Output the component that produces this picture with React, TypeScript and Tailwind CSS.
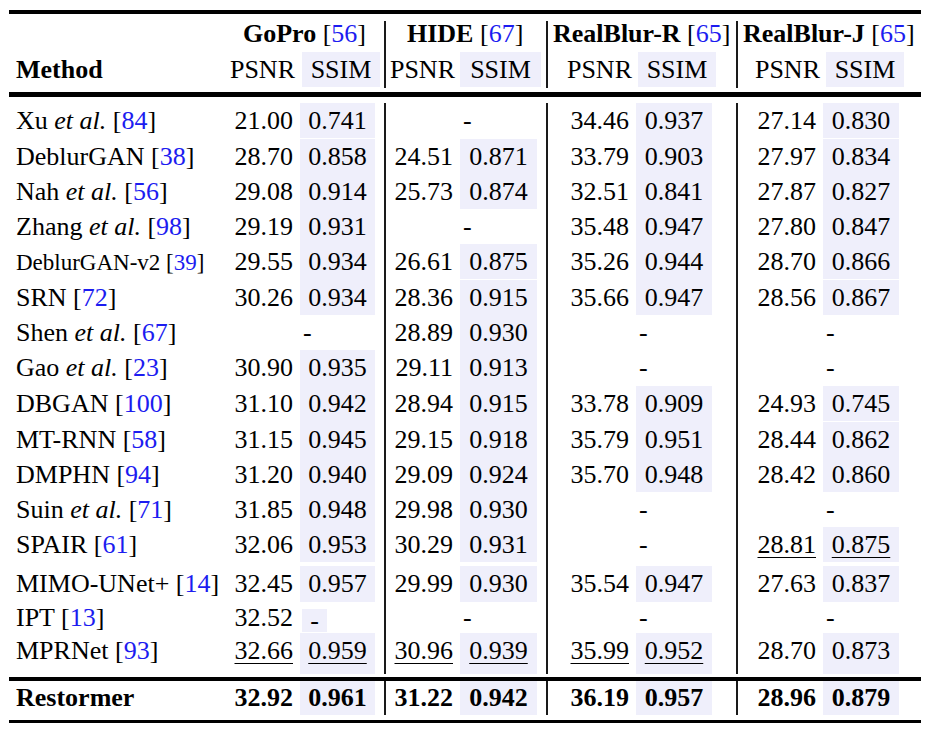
import React from 'react'

const COLS =
  'grid grid-rows-1 grid-cols-[219px_72px_75px_11px_74px_77px_11px_88px_76px_26px_85px_76px_22px]'

// shade variants for the SSIM cells
const S = 'bg-[#efeffb]'
const SB = 'bg-[#efeffb] mb-[1px]'
const ST = 'bg-[#efeffb] mt-[4px]'
const SP = 'bg-[#efeffb] pb-[5px]'
const IPT = 'bg-[#efeffb] ml-[2px] mr-[48px] mt-[7px] mb-[1px]'

type Grp = '-' | [string, string, string, boolean?]

type Row = {
  name: React.ReactNode
  h: string
  pad?: string
  small?: boolean
  go: Grp
  hide: Grp
  rbr: Grp
  rbj: Grp
}

function Cite({ n }: { n: string }) {
  return (
    <>
      [<span className="text-[#1c1cf0]">{n}</span>]
    </>
  )
}

function VLine() {
  return <div className="border-r-2 border-[#1a1a1a]" />
}

function Group({ g, pad = '', bold = false }: { g: Grp; pad?: string; bold?: boolean }) {
  if (g === '-') {
    return (
      <>
        <div />
        <div className={`flex items-center pl-[3px] ${pad}`}>-</div>
      </>
    )
  }
  const [p, s, sh, u] = g
  const uc = u ? 'underline decoration-1 underline-offset-[4px]' : ''
  return (
    <>
      <div className={`flex items-center justify-end pr-[7px] ${pad} ${bold ? 'font-bold' : ''}`}>
        <span className={uc}>{p}</span>
      </div>
      <div className={`flex items-center justify-center ${sh} ${bold ? 'font-bold' : ''}`}>
        <span className={uc}>{s}</span>
      </div>
    </>
  )
}

const rows: Row[] = [
  {
    name: <>Xu <i>et al.</i> <Cite n="84" /></>,
    h: 'h-[36px]',
    go: ['21.00', '0.741', SB],
    hide: '-',
    rbr: ['34.46', '0.937', S],
    rbj: ['27.14', '0.830', SB],
  },
  {
    name: <>DeblurGAN <Cite n="38" /></>,
    h: 'h-[35px]',
    go: ['28.70', '0.858', S],
    hide: ['24.51', '0.871', S],
    rbr: ['33.79', '0.903', S],
    rbj: ['27.97', '0.834', S],
  },
  {
    name: <>Nah <i>et al.</i> <Cite n="56" /></>,
    h: 'h-[35px]',
    go: ['29.08', '0.914', S],
    hide: ['25.73', '0.874', S],
    rbr: ['32.51', '0.841', S],
    rbj: ['27.87', '0.827', S],
  },
  {
    name: <>Zhang <i>et al.</i> <Cite n="98" /></>,
    h: 'h-[35px]',
    go: ['29.19', '0.931', S],
    hide: '-',
    rbr: ['35.48', '0.947', S],
    rbj: ['27.80', '0.847', S],
  },
  {
    name: <>DeblurGAN-v2 <Cite n="39" /></>,
    h: 'h-[36px]',
    small: true,
    go: ['29.55', '0.934', S],
    hide: ['26.61', '0.875', SB],
    rbr: ['35.26', '0.944', S],
    rbj: ['28.70', '0.866', SB],
  },
  {
    name: <>SRN <Cite n="72" /></>,
    h: 'h-[35px]',
    go: ['30.26', '0.934', S],
    hide: ['28.36', '0.915', S],
    rbr: ['35.66', '0.947', S],
    rbj: ['28.56', '0.867', S],
  },
  {
    name: <>Shen <i>et al.</i> <Cite n="67" /></>,
    h: 'h-[35px]',
    go: '-',
    hide: ['28.89', '0.930', S],
    rbr: '-',
    rbj: '-',
  },
  {
    name: <>Gao <i>et al.</i> <Cite n="23" /></>,
    h: 'h-[36px]',
    go: ['30.90', '0.935', S],
    hide: ['29.11', '0.913', S],
    rbr: '-',
    rbj: '-',
  },
  {
    name: <>DBGAN <Cite n="100" /></>,
    h: 'h-[36px]',
    go: ['31.10', '0.942', S],
    hide: ['28.94', '0.915', S],
    rbr: ['33.78', '0.909', S],
    rbj: ['24.93', '0.745', SB],
  },
  {
    name: <>MT-RNN <Cite n="58" /></>,
    h: 'h-[35px]',
    go: ['31.15', '0.945', S],
    hide: ['29.15', '0.918', S],
    rbr: ['35.79', '0.951', S],
    rbj: ['28.44', '0.862', S],
  },
  {
    name: <>DMPHN <Cite n="94" /></>,
    h: 'h-[35px]',
    go: ['31.20', '0.940', S],
    hide: ['29.09', '0.924', S],
    rbr: ['35.70', '0.948', S],
    rbj: ['28.42', '0.860', S],
  },
  {
    name: <>Suin <i>et al.</i> <Cite n="71" /></>,
    h: 'h-[35px]',
    go: ['31.85', '0.948', S],
    hide: ['29.98', '0.930', S],
    rbr: '-',
    rbj: '-',
  },
  {
    name: <>SPAIR <Cite n="61" /></>,
    h: 'h-[35px]',
    go: ['32.06', '0.953', S],
    hide: ['30.29', '0.931', S],
    rbr: '-',
    rbj: ['28.81', '0.875', S, true],
  },
  {
    name: <>MIMO-UNet+ <Cite n="14" /></>,
    h: 'h-[40px]',
    pad: 'pt-[4px]',
    go: ['32.45', '0.957', ST],
    hide: ['29.99', '0.930', ST],
    rbr: ['35.54', '0.947', ST],
    rbj: ['27.63', '0.837', ST],
  },
  {
    name: <>IPT <Cite n="13" /></>,
    h: 'h-[31px]',
    go: ['32.52', '-', IPT],
    hide: '-',
    rbr: '-',
    rbj: '-',
  },
  {
    name: <>MPRNet <Cite n="93" /></>,
    h: 'h-[41px]',
    pad: 'pb-[5px]',
    go: ['32.66', '0.959', SP, true],
    hide: ['30.96', '0.939', SP, true],
    rbr: ['35.99', '0.952', SP, true],
    rbj: ['28.70', '0.873', SP],
  },
]

export default function App() {
  return (
    <div className="w-[928px] h-[732px] bg-white text-black font-['Liberation_Serif',serif] text-[26px] leading-none overflow-hidden">
      <div className="ml-[9px] w-[912px]">
        {/* top rule */}
        <div className="mt-[10px] h-[4px] bg-black" />

        {/* header */}
        <div className={`${COLS} grid-rows-[36px_35px] mt-[2px] mb-[5px]`}>
          <div />
          <div className="col-span-2 flex items-center pl-[15px] whitespace-nowrap">
            <span>
              <b>GoPro</b> <Cite n="56" />
            </span>
          </div>
          <div className="row-span-2 border-r-2 border-[#1a1a1a] mt-[5px] -mb-[1px]" />
          <div className="col-span-2 flex items-center pl-[21px] whitespace-nowrap">
            <span>
              <b>HIDE</b> <Cite n="67" />
            </span>
          </div>
          <div className="row-span-2 border-r-2 border-[#1a1a1a] mt-[5px] -mb-[1px]" />
          <div className="col-span-2 flex items-center pl-[5px] whitespace-nowrap">
            <span>
              <b>RealBlur-R</b> <Cite n="65" />
            </span>
          </div>
          <div className="row-span-2 border-r-2 border-[#1a1a1a] mt-[5px] -mb-[1px]" />
          <div className="col-span-3 flex items-center pl-[5px] whitespace-nowrap">
            <span>
              <b>RealBlur-J</b> <Cite n="65" />
            </span>
          </div>

          <div className="flex items-center pl-[7px] font-bold">Method</div>
          <div className="flex items-center justify-end pr-[5px]">PSNR</div>
          <div className="flex items-center justify-center bg-[#efeffb] ml-[2px] -mr-[5px]">SSIM</div>
          <div className="flex items-center justify-end pr-[5px]">PSNR</div>
          <div className="flex items-center justify-center bg-[#efeffb] -mr-[4px]">SSIM</div>
          <div className="flex items-center justify-end pr-[4px]">PSNR</div>
          <div className="flex items-center justify-center bg-[#efeffb] ml-[2px] -mr-[4px]">SSIM</div>
          <div className="flex items-center justify-end pr-[3px]">PSNR</div>
          <div className="flex items-center justify-center bg-[#efeffb] ml-[3px] -mr-[5px]">SSIM</div>
          <div />
        </div>

        {/* mid rule */}
        <div className="h-[5px] bg-black" />

        {/* body */}
        <div className="pt-[6px] pb-[3px]">
          {rows.map((r, i) => (
            <div key={i} className={`${COLS} ${r.h}`}>
              <div
                className={`flex items-center pl-[7px] whitespace-nowrap ${r.pad ?? ''} ${
                  r.small ? 'text-[23px]' : ''
                }`}
              >
                <span>{r.name}</span>
              </div>
              <Group g={r.go} pad={r.pad} />
              <VLine />
              <Group g={r.hide} pad={r.pad} />
              <VLine />
              <Group g={r.rbr} pad={r.pad} />
              <VLine />
              <Group g={r.rbj} pad={r.pad} />
              <div />
            </div>
          ))}
        </div>

        {/* rule before ours */}
        <div className="h-[4px] bg-black" />

        <div className={`${COLS} h-[34px] mb-[5px]`}>
          <div className="flex items-center pl-[7px] font-bold">Restormer</div>
          <Group g={['32.92', '0.961', S]} bold />
          <VLine />
          <Group g={['31.22', '0.942', S]} bold />
          <VLine />
          <Group g={['36.19', '0.957', S]} bold />
          <VLine />
          <Group g={['28.96', '0.879', S]} bold />
          <div />
        </div>

        {/* bottom rule */}
        <div className="h-[3px] bg-black" />
      </div>
    </div>
  )
}
